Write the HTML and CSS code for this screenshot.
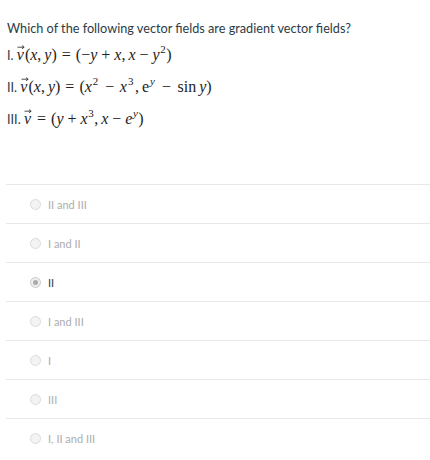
FILE: index.html
```html
<!DOCTYPE html>
<html>
<head>
<meta charset="utf-8">
<link rel="stylesheet" href="styles.css">
</head>
<body>
<div class="question">
  <p class="title">Which of the following vector fields are gradient vector fields?</p>
  <p class="stmt first"><span class="num">I.</span> <span class="math"><span class="vec">v<svg class="arrow" viewBox="0 0 8 4"><path d="M0.5 2.2H7M5 0.6L7.2 2.2L5 3.8" fill="none" stroke="#222" stroke-width="0.8"/></svg></span><span class="r">(</span>x<span class="r p">,</span>y<span class="r">)</span><span class="r rel">=</span><span class="r">(−</span>y<span class="r bin">+</span>x<span class="r p">,</span>x<span class="r bin">−</span>y<sup class="r">2</sup><span class="r">)</span></span></p>
  <p class="stmt second wide"><span class="num">II.</span> <span class="math"><span class="vec">v<svg class="arrow" viewBox="0 0 8 4"><path d="M0.5 2.2H7M5 0.6L7.2 2.2L5 3.8" fill="none" stroke="#222" stroke-width="0.8"/></svg></span><span class="r">(</span>x<span class="r p">,</span>y<span class="r">)</span><span class="r rel">=</span><span class="r">(</span>x<sup class="r">2</sup><span class="r bin">−</span>x<sup class="r">3</sup><span class="r p">,</span><span class="r">e</span><sup>y</sup><span class="r bin">−</span><span class="r fn">sin</span>y<span class="r">)</span></span></p>
  <p class="stmt"><span class="num">III.</span> <span class="math"><span class="vec">v<svg class="arrow" viewBox="0 0 8 4"><path d="M0.5 2.2H7M5 0.6L7.2 2.2L5 3.8" fill="none" stroke="#222" stroke-width="0.8"/></svg></span><span class="r rel">=</span><span class="r">(</span>y<span class="r bin">+</span>x<sup class="r">3</sup><span class="r p">,</span>x<span class="r bin">−</span>e<sup>y</sup><span class="r">)</span></span></p>

  <div class="answers">
    <label class="answer"><span class="radio"></span><span class="label">II and III</span></label>
    <label class="answer"><span class="radio"></span><span class="label">I and II</span></label>
    <label class="answer selected"><span class="radio"></span><span class="label">II</span></label>
    <label class="answer"><span class="radio"></span><span class="label">I and III</span></label>
    <label class="answer"><span class="radio"></span><span class="label">I</span></label>
    <label class="answer"><span class="radio"></span><span class="label">III</span></label>
    <label class="answer"><span class="radio"></span><span class="label">I, II and III</span></label>
  </div>
</div>
</body>
</html>
```

FILE: styles.css
```css
html, body {
  margin: 0;
  padding: 0;
  background: #fff;
}
body {
  font-family: Lato, "Liberation Sans", sans-serif;
  color: #2d3b45;
  overflow: hidden;
}
.question {
  padding: 19px 0 0 7px;
}
.title {
  margin: 0 0 3px 0;
  font-size: 12.7px;
  line-height: 18px;
}
.stmt {
  margin: 0;
  font-size: 12.7px;
  height: 30px;
  line-height: 30px;
  white-space: nowrap;
}
.stmt.first,
.stmt.second {
  height: 32px;
}
.math {
  font-family: "Liberation Serif", "DejaVu Serif", serif;
  font-style: italic;
  font-size: 16px;
  color: #222;
  line-height: 1;
}
.math .r {
  font-style: normal;
}
.math .rel {
  margin: 0 5px;
}
.math .bin {
  margin: 0 4px;
}
.wide .math .bin {
  margin: 0 5.5px;
}
.math .p {
  margin-right: 3px;
}
.math .fn {
  margin-left: 1px;
  margin-right: 3px;
}
.math sup {
  font-size: 11px;
  line-height: 0;
  vertical-align: 7px;
  margin-left: 0.5px;
  margin-right: 0.5px;
}
.wide .math sup {
  margin-left: 1px;
  margin-right: 1.5px;
}
.vec {
  position: relative;
  display: inline-block;
  padding-right: 1px;
}
.arrow {
  position: absolute;
  left: 0.5px;
  top: -2px;
  width: 8px;
  height: 4px;
}
.answers {
  margin-top: 50px;
  margin-left: -1px;
}
.answer {
  display: flex;
  align-items: center;
  height: 38px;
  border-top: 1px solid #e8e8e8;
  padding-left: 24px;
  font-size: 11px;
  color: #adadad;
}
.radio {
  width: 11px;
  height: 11px;
  border-radius: 50%;
  border: 1px solid #dcdcdc;
  background: #f3f3f3;
  margin-right: 7px;
  box-sizing: border-box;
  position: relative;
}
.selected .radio {
  border-color: #cacaca;
  background: #eeeeee;
}
.selected .radio::after {
  content: "";
  position: absolute;
  left: 2px;
  top: 2px;
  width: 5px;
  height: 5px;
  border-radius: 50%;
  background: #ababab;
}
.selected .label {
  color: #2d3b45;
}
```
